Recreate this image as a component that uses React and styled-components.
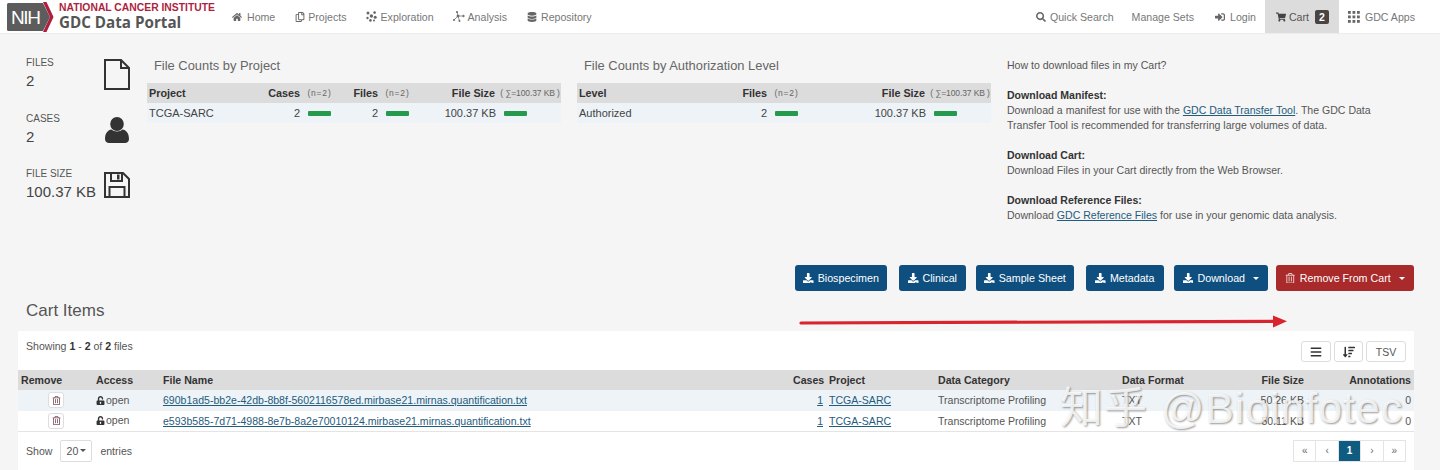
import React from 'react';
import styled, { createGlobalStyle } from 'styled-components';
import {
  FaHome, FaRegCopy, FaDatabase, FaSearch, FaSignInAlt, FaShoppingCart,
  FaDownload, FaRegTrashAlt, FaUnlockAlt, FaBars, FaSortAmountDown,
} from 'react-icons/fa';

const GlobalStyle = createGlobalStyle`
  html, body { margin: 0; padding: 0; height: 470px; overflow: hidden; background: #f5f5f5; }
  body { font-family: "Liberation Sans", Arial, sans-serif; font-size: 11.5px; color: #444; }
  * { box-sizing: border-box; }
`;

const Page = styled.div`
  position: relative;
  width: 1440px;
  height: 470px;
  overflow: hidden;
`;

const Nav = styled.nav`
  display: flex;
  align-items: center;
  justify-content: space-between;
  height: 34px;
  background: #fff;
  border-bottom: 1px solid #ececec;
  padding-left: 7px;
  padding-right: 25px;
`;
const NavSide = styled.div`
  display: flex;
  align-items: center;
  height: 100%;
`;
const Logo = styled.div`
  display: flex;
  align-items: center;
  gap: 5px;
  width: 225px;
`;
const LogoMark = styled.svg`
  width: 47px;
  height: 30px;
  flex: none;
`;
const NihText = styled.text`
  font-family: "Liberation Sans", Arial, sans-serif;
  font-size: 19px;
  fill: #fff;
  letter-spacing: -1.4px;
`;
const LogoWords = styled.div`
  display: flex;
  flex-direction: column;
  margin-top: -3px;
`;
const Institute = styled.span`
  font-size: 10.35px;
  font-weight: 700;
  line-height: 13px;
  color: #ad1f3d;
  white-space: nowrap;
`;
const PortalName = styled.span`
  font-family: "Open Sans", "Liberation Sans", sans-serif;
  font-size: 15.2px;
  font-weight: 700;
  line-height: 16px;
  color: #555;
  white-space: nowrap;
`;
const NavItem = styled.a`
  display: flex;
  align-items: center;
  gap: ${(p) => p.$gap || 5}px;
  height: 100%;
  margin-left: ${(p) => p.$left || 0}px;
  padding: ${(p) => p.$pad || 0};
  font-size: 10.6px;
  white-space: nowrap;
  color: ${(p) => (p.$active ? '#555' : '#777')};
  background: ${(p) => (p.$active ? '#dcdcdc' : 'transparent')};
  svg { flex: none; font-size: 10px; color: ${(p) => (p.$active ? '#444' : '#666')}; }
`;
const Badge = styled.span`
  width: 14px;
  margin-left: 3px;
  border-radius: 2px;
  font-size: 10.5px;
  font-weight: 700;
  line-height: 14px;
  text-align: center;
  color: #fff;
  background: #4a4443;
`;

const Summary = styled.section`
  display: flex;
  height: 215px;
  padding: 23px 0 0 26px;
`;
const Stats = styled.div`
  display: flex;
  flex-direction: column;
  width: 121px;
  flex: none;
`;
const Stat = styled.div`
  display: flex;
  justify-content: space-between;
  height: 55.5px;
  width: 104px;
`;
const StatLabel = styled.div`
  font-size: 10px;
  line-height: 12px;
  color: #555;
`;
const StatValue = styled.div`
  font-size: 15px;
  line-height: 22px;
  margin-top: 1px;
  color: #444;
  white-space: nowrap;
`;
const StatIcon = styled.svg`
  display: block;
  flex: none;
  width: 26px;
  height: ${(p) => p.$h}px;
  margin-top: ${(p) => p.$top}px;
`;
const TableBlock = styled.div`
  width: 414px;
  margin-right: 16px;
  flex: none;
`;
const BlockTitle = styled.h3`
  margin: 0;
  padding: 1px 0 0 7px;
  height: 26px;
  font-size: 12.9px;
  line-height: 16px;
  font-weight: 400;
  color: #666;
`;
const CountGrid = styled.div`
  display: grid;
  grid-template-columns: ${(p) => p.$cols};
  align-items: center;
`;
const CountHead = styled(CountGrid)`
  height: 20px;
  background: #dcdcdc;
  font-size: 10.8px;
  font-weight: 700;
  color: #333;
`;
const CountRow = styled(CountGrid)`
  height: 20px;
  background: #edf3f7;
  font-size: 11px;
  color: #444;
`;
const CountCell = styled.div`
  display: flex;
  align-items: center;
  justify-content: ${(p) => (p.$left ? 'flex-start' : 'flex-end')};
  padding-left: ${(p) => (p.$left ? 2 : 0)}px;
  white-space: nowrap;
`;
const Hint = styled.span`
  width: ${(p) => p.$w}px;
  margin-left: 4px;
  font-size: 8.5px;
  font-weight: 400;
  letter-spacing: ${(p) => (p.$tight ? -0.1 : 0.8)}px;
  color: #666;
  text-align: center;
  white-space: nowrap;
`;
const BarSlot = styled.span`
  display: block;
  width: ${(p) => p.$w}px;
  padding-left: 8px;
`;
const Bar = styled.span`
  display: block;
  width: 23px;
  height: 5px;
  border-radius: 1px;
  background: #259a4c;
`;
const Help = styled.aside`
  padding: 1px 0 0 0;
  width: 380px;
  font-size: 10.55px;
  line-height: 15px;
  color: #555;
`;
const HelpPara = styled.p`
  margin: 0 0 15px;
`;
const HelpTitle = styled.strong`
  display: block;
  color: #333;
`;
const Link = styled.a`
  color: #1f5c7d;
  text-decoration: underline;
`;

const Actions = styled.div`
  display: flex;
  justify-content: flex-end;
  height: 26px;
  padding-right: 26px;
  margin-top: 16px;
`;
const ActionButton = styled.button`
  display: flex;
  align-items: center;
  gap: 4px;
  height: 26px;
  width: ${(p) => p.$w}px;
  margin-left: ${(p) => p.$left}px;
  padding: 0;
  justify-content: center;
  border: 0;
  border-radius: 3px;
  font-family: inherit;
  font-size: 10.7px;
  color: #fff;
  background: ${(p) => (p.$danger ? '#a82a2a' : '#0f4f80')};
  svg { font-size: 10.5px; color: ${(p) => (p.$danger ? '#e9c4c4' : '#fff')}; }
`;
const Caret = styled.span`
  display: inline-block;
  margin-left: ${(p) => p.$left ?? 4}px;
  border-top: 3.5px solid currentColor;
  border-left: 3.5px solid transparent;
  border-right: 3.5px solid transparent;
`;
const SectionTitle = styled.h2`
  margin: 10px 0 0 26px;
  height: 30px;
  font-size: 17px;
  line-height: 20px;
  font-weight: 400;
  color: #555;
`;
const Panel = styled.section`
  width: 1396px;
  height: 139px;
  margin-left: 18px;
  background: #fff;
`;
const PanelTop = styled.div`
  display: flex;
  justify-content: space-between;
  height: 39px;
  padding: 9px 8px 0 8px;
  font-size: 10.55px;
  line-height: 13px;
  color: #555;
  b { color: #333; }
`;
const ToolButtons = styled.div`
  display: flex;
  gap: 3px;
  margin-top: 1px;
`;
const ToolButton = styled.button`
  display: flex;
  align-items: center;
  justify-content: center;
  width: ${(p) => p.$w}px;
  height: 21px;
  padding: 0;
  border: 1px solid #ddd;
  border-radius: 3px;
  background: #fff;
  font-family: inherit;
  font-size: 10.5px;
  color: #555;
  svg { font-size: 12px; color: #333; }
`;
const Table = styled.table`
  width: 1396px;
  table-layout: fixed;
  border-collapse: collapse;
  border-bottom: 1px solid #e4e4e4;
`;
const Th = styled.th`
  height: 20px;
  padding: 0 3px;
  font-size: 10.6px;
  font-weight: 700;
  color: #333;
  background: #dcdcdc;
  text-align: ${(p) => p.$align || 'left'};
  white-space: nowrap;
`;
const Tr = styled.tr`
  background: ${(p) => (p.$shade ? '#edf3f7' : '#fff')};
`;
const Td = styled.td`
  height: 20.5px;
  padding: 0 3px;
  font-size: 10.55px;
  color: #555;
  text-align: ${(p) => p.$align || 'left'};
  white-space: nowrap;
`;
const TrashButton = styled.button`
  display: flex;
  align-items: center;
  justify-content: center;
  width: 16px;
  height: 16px;
  margin: 0 auto 0 27px;
  padding: 0;
  border: 1px solid #ddd;
  border-radius: 3px;
  background: #fff;
  color: #7d5560;
  font-size: 9px;
`;
const Access = styled.span`
  display: inline-flex;
  align-items: center;
  gap: 1px;
  svg { font-size: 9px; color: #333; }
`;
const PanelBottom = styled.div`
  display: flex;
  justify-content: space-between;
  align-items: center;
  padding: 8px 8px 0 8px;
  font-size: 10.55px;
  color: #555;
`;
const Entries = styled.div`
  display: flex;
  align-items: center;
  gap: 8px;
`;
const PageSelect = styled.span`
  display: flex;
  align-items: center;
  justify-content: center;
  width: 32px;
  height: 22px;
  border: 1px solid #ddd;
  border-radius: 2px;
`;
const Pager = styled.div`
  display: flex;
`;
const PageLink = styled.span`
  display: flex;
  align-items: center;
  justify-content: center;
  width: 23.4px;
  height: 22px;
  border: 1px solid #e4e4e4;
  margin-left: -1px;
  font-size: 10px;
  font-weight: ${(p) => (p.$current ? 700 : 400)};
  color: ${(p) => (p.$current ? '#fff' : '#666')};
  background: ${(p) => (p.$current ? '#0f5c80' : '#fff')};
`;

const Arrow = styled.svg`
  position: absolute;
  left: 798px;
  top: 315px;
  width: 492px;
  height: 14px;
`;
const Watermark = styled.div`
  position: absolute;
  left: 1060px;
  top: 384px;
  font-family: "Liberation Sans", "Noto Sans CJK SC", sans-serif;
  font-size: 43px;
  line-height: 48px;
  letter-spacing: 0.9px;
  white-space: nowrap;
  color: rgba(255, 255, 255, 0.82);
  text-shadow: 1px 1px 2px rgba(0, 0, 0, 0.4);
  pointer-events: none;
`;

const ExploreIcon = () => (
  <svg width="11" height="11" viewBox="0 0 11 11" fill="currentColor">
    <circle cx="2" cy="2" r="1.5" /><circle cx="8.6" cy="1.6" r="1.3" /><circle cx="5.4" cy="5" r="1.7" />
    <circle cx="1.5" cy="7" r="1.2" /><circle cx="9.2" cy="6.2" r="1.5" /><circle cx="4.4" cy="9.4" r="1.3" />
    <circle cx="8" cy="9.6" r="1" />
  </svg>
);
const AnalysisIcon = () => (
  <svg width="12" height="11" viewBox="0 0 12 11" fill="currentColor" stroke="currentColor" strokeWidth="0.7">
    <path d="M1 9 L5 5 L4 1 M5 5 L6.5 10 M5 5 L10.5 5" fill="none" />
    <circle cx="5" cy="5" r="1.1" /><circle cx="1" cy="9" r="0.7" /><circle cx="4" cy="1" r="0.7" />
    <circle cx="10.5" cy="5" r="0.8" /><circle cx="6.5" cy="10" r="0.7" />
  </svg>
);
const AppsIcon = () => (
  <svg width="12" height="12" viewBox="0 0 12 12" fill="currentColor">
    {[0, 4.5, 9].flatMap((y) => [0, 4.5, 9].map((x) => <rect key={`${x}-${y}`} x={x} y={y} width="2.8" height="2.8" />))}
  </svg>
);
const NihLogo = () => (
  <LogoMark viewBox="0 0 47 30">
    <path d="M1.5 1 H36 L43 15 L36 29 H1.5 a1.5 1.5 0 0 1 -1.5 -1.5 V2.5 A1.5 1.5 0 0 1 1.5 1 Z" fill="#5c5c5c" />
    <path d="M36 0 H39.5 L46.5 15 L39.5 30 H36 L43 15 Z" fill="#ad1f3d" />
    <NihText x="4" y="22">NIH</NihText>
  </LogoMark>
);
const FileIcon = () => (
  <StatIcon viewBox="0 0 26 31" $h={31} $top={2} fill="none" stroke="#333" strokeWidth="2">
    <path d="M1 1 H17 L25 9 V30 H1 Z M17 1 V9 H25" />
  </StatIcon>
);
const UserIcon = () => (
  <StatIcon viewBox="0 0 26 26" $h={26} $top={4} fill="#333">
    <ellipse cx="13" cy="7" rx="6.8" ry="7" />
    <path d="M1 22 C1 16 4 13 7.5 12.5 C10 15 16 15 18.5 12.5 C22 13 25 16 25 22 C25 24.5 23 26 21 26 H5 C3 26 1 24.5 1 22 Z" />
  </StatIcon>
);
const SaveIcon = () => (
  <StatIcon viewBox="0 0 26 26" $h={26} $top={4} fill="none" stroke="#333" strokeWidth="2">
    <path d="M1 1 H19 L25 7 V25 H1 Z M7 1 V9 H18 V1 M5.5 25 V15 H20.5 V25" />
    <rect x="13" y="2.5" width="2.5" height="5" fill="#333" stroke="none" />
  </StatIcon>
);

const files = [
  { id: '690b1ad5-bb2e-42db-8b8f-5602116578ed.mirbase21.mirnas.quantification.txt', size: '50.26 KB' },
  { id: 'e593b585-7d71-4988-8e7b-8a2e70010124.mirbase21.mirnas.quantification.txt', size: '50.11 KB' },
];

const columns = [
  { name: 'Remove', width: 75 },
  { name: 'Access', width: 67 },
  { name: 'File Name', width: 630 },
  { name: 'Cases', width: 36, align: 'right' },
  { name: 'Project', width: 109 },
  { name: 'Data Category', width: 184 },
  { name: 'Data Format', width: 111 },
  { name: 'File Size', width: 77, align: 'right' },
  { name: 'Annotations', width: 107, align: 'right' },
];

export default function App() {
  return (
    <Page>
      <GlobalStyle />
      <Nav>
        <NavSide>
          <Logo>
            <NihLogo />
            <LogoWords>
              <Institute>NATIONAL CANCER INSTITUTE</Institute>
              <PortalName>GDC Data Portal</PortalName>
            </LogoWords>
          </Logo>
          <NavItem><FaHome />Home</NavItem>
          <NavItem $left={20} $gap={3}><FaRegCopy />Projects</NavItem>
          <NavItem $left={19} $gap={4}><ExploreIcon />Exploration</NavItem>
          <NavItem $left={19} $gap={3}><AnalysisIcon />Analysis</NavItem>
          <NavItem $left={20} $gap={4}><FaDatabase />Repository</NavItem>
        </NavSide>
        <NavSide>
          <NavItem $gap={4}><FaSearch />Quick Search</NavItem>
          <NavItem $left={18}>Manage Sets</NavItem>
          <NavItem $left={21}><FaSignInAlt />Login</NavItem>
          <NavItem $left={9} $gap={3} $active $pad="0 10px 0 11px"><FaShoppingCart />Cart<Badge>2</Badge></NavItem>
          <NavItem $left={9}><AppsIcon />GDC Apps</NavItem>
        </NavSide>
      </Nav>

      <Summary>
        <Stats>
          <Stat>
            <div><StatLabel>FILES</StatLabel><StatValue>2</StatValue></div>
            <FileIcon />
          </Stat>
          <Stat>
            <div><StatLabel>CASES</StatLabel><StatValue>2</StatValue></div>
            <UserIcon />
          </Stat>
          <Stat>
            <div><StatLabel>FILE SIZE</StatLabel><StatValue>100.37 KB</StatValue></div>
            <SaveIcon />
          </Stat>
        </Stats>

        <TableBlock>
          <BlockTitle>File Counts by Project</BlockTitle>
          <CountHead $cols="1fr 108px 78px 148px">
            <CountCell $left>Project</CountCell>
            <CountCell>Cases<Hint $w={31}>(n=2)</Hint></CountCell>
            <CountCell>Files<Hint $w={31}>(n=2)</Hint></CountCell>
            <CountCell>File Size<Hint $w={62} $tight>( ∑=100.37 KB )</Hint></CountCell>
          </CountHead>
          <CountRow $cols="1fr 108px 78px 148px">
            <CountCell $left>TCGA-SARC</CountCell>
            <CountCell>2<BarSlot $w={35}><Bar /></BarSlot></CountCell>
            <CountCell>2<BarSlot $w={35}><Bar /></BarSlot></CountCell>
            <CountCell>100.37 KB<BarSlot $w={65}><Bar /></BarSlot></CountCell>
          </CountRow>
        </TableBlock>

        <TableBlock>
          <BlockTitle>File Counts by Authorization Level</BlockTitle>
          <CountHead $cols="1fr 100px 189px">
            <CountCell $left>Level</CountCell>
            <CountCell>Files<Hint $w={31}>(n=2)</Hint></CountCell>
            <CountCell>File Size<Hint $w={62} $tight>( ∑=100.37 KB )</Hint></CountCell>
          </CountHead>
          <CountRow $cols="1fr 100px 189px">
            <CountCell $left>Authorized</CountCell>
            <CountCell>2<BarSlot $w={35}><Bar /></BarSlot></CountCell>
            <CountCell>100.37 KB<BarSlot $w={65}><Bar /></BarSlot></CountCell>
          </CountRow>
        </TableBlock>

        <Help>
          <HelpPara>How to download files in my Cart?</HelpPara>
          <HelpPara>
            <HelpTitle>Download Manifest:</HelpTitle>
            Download a manifest for use with the <Link>GDC Data Transfer Tool</Link>. The GDC Data<br />
            Transfer Tool is recommended for transferring large volumes of data.
          </HelpPara>
          <HelpPara>
            <HelpTitle>Download Cart:</HelpTitle>
            Download Files in your Cart directly from the Web Browser.
          </HelpPara>
          <HelpPara>
            <HelpTitle>Download Reference Files:</HelpTitle>
            Download <Link>GDC Reference Files</Link> for use in your genomic data analysis.
          </HelpPara>
        </Help>
      </Summary>

      <Actions>
        <ActionButton $w={92} $left={0}><FaDownload />Biospecimen</ActionButton>
        <ActionButton $w={67} $left={12}><FaDownload />Clinical</ActionButton>
        <ActionButton $w={98} $left={10}><FaDownload />Sample Sheet</ActionButton>
        <ActionButton $w={78} $left={12}><FaDownload />Metadata</ActionButton>
        <ActionButton $w={94} $left={10}><FaDownload />Download<Caret /></ActionButton>
        <ActionButton $w={138} $left={8} $danger><FaRegTrashAlt />Remove From Cart<Caret /></ActionButton>
      </Actions>

      <SectionTitle>Cart Items</SectionTitle>

      <Panel>
        <PanelTop>
          <span>Showing <b>1</b> - <b>2</b> of <b>2</b> files</span>
          <ToolButtons>
            <ToolButton $w={30}><FaBars /></ToolButton>
            <ToolButton $w={29}><FaSortAmountDown /></ToolButton>
            <ToolButton $w={40}>TSV</ToolButton>
          </ToolButtons>
        </PanelTop>
        <Table>
          <colgroup>
            {columns.map((c) => <col key={c.name} style={{ width: c.width }} />)}
          </colgroup>
          <thead>
            <tr>
              {columns.map((c) => <Th key={c.name} $align={c.align}>{c.name}</Th>)}
            </tr>
          </thead>
          <tbody>
            {files.map((f, i) => (
              <Tr key={f.id} $shade={i === 0}>
                <Td><TrashButton><FaRegTrashAlt /></TrashButton></Td>
                <Td><Access><FaUnlockAlt />open</Access></Td>
                <Td><Link>{f.id}</Link></Td>
                <Td $align="right"><Link>1</Link></Td>
                <Td><Link>TCGA-SARC</Link></Td>
                <Td>Transcriptome Profiling</Td>
                <Td>TXT</Td>
                <Td $align="right">{f.size}</Td>
                <Td $align="right">0</Td>
              </Tr>
            ))}
          </tbody>
        </Table>
        <PanelBottom>
          <Entries>Show <PageSelect>20<Caret $left={2} /></PageSelect> entries</Entries>
          <Pager>
            <PageLink>«</PageLink>
            <PageLink>‹</PageLink>
            <PageLink $current>1</PageLink>
            <PageLink>›</PageLink>
            <PageLink>»</PageLink>
          </Pager>
        </PanelBottom>
      </Panel>

      <Arrow viewBox="0 0 492 14">
        <path d="M3 8 L476 6.3" stroke="#d9232e" strokeWidth="3.2" strokeLinecap="round" />
        <path d="M475 0.5 L489 6.3 L475 12.5 Z" fill="#d9232e" />
      </Arrow>
      <Watermark>知乎 @Bioinfotec</Watermark>
    </Page>
  );
}
